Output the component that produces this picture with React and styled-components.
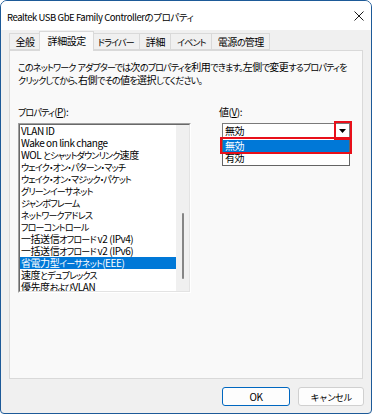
import React from 'react';
import styled, { createGlobalStyle } from 'styled-components';

const Global = createGlobalStyle`
  html, body { margin: 0; padding: 0; background: #ffffff; }
  body {
    font-family: "Noto Sans CJK JP", "Noto Sans", sans-serif;
    font-size: 10px;
    letter-spacing: -0.45px;
    color: #000;
    font-feature-settings: "palt";
  }
  #root { width: 372px; height: 414px; }
`;

const Kana = styled.span`
  font-size: 9px;
  letter-spacing: -0.8px;
  line-height: 0;
`;

const KANA_RE = /([\u3000-\u30FF\uFF01-\uFF60]+)/;

function JText({ children }) {
  const parts = String(children).split(KANA_RE);
  return parts.map((p, i) => (i % 2 === 1 ? <Kana key={i}>{p}</Kana> : p));
}

const Window = styled.div`
  box-sizing: border-box;
  width: 372px;
  height: 414px;
  border: 1px solid #1d5a98;
  border-radius: 7px 7px 4px 4px;
  background: #f0f0f0;
  display: flex;
  flex-direction: column;
  overflow: hidden;
`;

const TitleBar = styled.div`
  flex: none;
  height: 29px;
  background: #ffffff;
  display: flex;
  align-items: center;
  justify-content: space-between;
  padding: 0 7px 0 6px;
`;

const Title = styled.span`
  font-size: 9.5px;
  letter-spacing: -0.45px;
  line-height: 12px;
  margin-top: 2px;
`;

const CloseIcon = () => (
  <svg width="10" height="10" viewBox="0 0 10 10">
    <path d="M0.5 0.5 L9.5 9.5 M9.5 0.5 L0.5 9.5" stroke="#1a1a1a" strokeWidth="1" fill="none" />
  </svg>
);

const TabStrip = styled.div`
  flex: none;
  height: 20px;
  display: flex;
  align-items: flex-end;
  padding: 0 8px;
  position: relative;
  z-index: 1;
`;

const Tab = styled.div`
  box-sizing: border-box;
  height: ${(p) => (p.$active ? '20px' : '17px')};
  padding: ${(p) => (p.$active ? '0 7.5px 2px' : '0 5.5px')};
  margin: 0 ${(p) => (p.$active ? '-2px' : '0')} ${(p) => (p.$active ? '-1px' : '0')} ${(p) => (p.$active ? '-2px' : '-1px')};
  border: 1px solid #d9d9d9;
  border-bottom: ${(p) => (p.$active ? 'none' : '1px solid #d9d9d9')};
  background: ${(p) => (p.$active ? '#f9f9f9' : '#f0f0f0')};
  display: flex;
  align-items: center;
  justify-content: center;
  line-height: 12px;
  white-space: nowrap;
  position: relative;
  z-index: ${(p) => (p.$active ? 2 : 1)};
  &:first-child { margin-left: 0; }
`;

const Panel = styled.div`
  flex: 1;
  margin: 0 8px;
  border: 1px solid #d9d9d9;
  background: #f9f9f9;
  padding: 9px 8px 0 8px;
  display: flex;
  flex-direction: column;
`;

const Description = styled.p`
  margin: 0;
  line-height: 13px;
  white-space: nowrap;
`;

const Columns = styled.div`
  display: flex;
  margin-top: 20px;
`;

const Column = styled.div`
  width: ${(p) => p.$width}px;
  margin-left: ${(p) => p.$offset || 0}px;
  display: flex;
  flex-direction: column;
`;

const Label = styled.div`
  line-height: 12px;
  height: 12px;
  margin-bottom: 5px;
  white-space: nowrap;
  u { text-decoration: underline; text-underline-offset: 1px; }
`;

const ListFrame = styled.div`
  box-sizing: border-box;
  height: 170px;
  border: 1px solid;
  border-color: #a0a0a0 #ffffff #ffffff #a0a0a0;
`;

const ListInner = styled.div`
  box-sizing: border-box;
  height: 100%;
  border: 1px solid;
  border-color: #696969 #e3e3e3 #e3e3e3 #696969;
  background: #ffffff;
  display: flex;
`;

const Items = styled.div`
  flex: 1;
  display: flex;
  flex-direction: column;
  overflow: hidden;
`;

const Item = styled.div`
  flex: none;
  height: 12px;
  line-height: 12px;
  padding-left: 1px;
  white-space: nowrap;
  background: ${(p) => (p.$selected ? '#0078d7' : 'transparent')};
  color: ${(p) => (p.$selected ? '#ffffff' : '#000000')};
`;

const ScrollBar = styled.div`
  width: 13px;
  background: #f0f0f0;
  display: flex;
  justify-content: center;
`;

const Thumb = styled.div`
  width: 2px;
  height: 66px;
  margin-top: 88px;
  border-radius: 1px;
  background: #858585;
`;

const ComboWrap = styled.div`
  position: relative;
  margin-left: 3px;
  width: 128px;
`;

const Combo = styled.div`
  box-sizing: border-box;
  height: 16px;
  border: 1px solid #7a7a7a;
  background: #ffffff;
  display: flex;
  align-items: center;
`;

const ComboText = styled.span`
  flex: 1;
  padding-left: 2px;
  line-height: 12px;
`;

const DropButton = styled.div`
  width: 14px;
  height: 100%;
  display: flex;
  align-items: center;
  justify-content: center;
  background: #ffffff;
`;

const Arrow = () => (
  <svg width="7" height="4" viewBox="0 0 7 4">
    <path d="M0 0 H7 L3.5 4 Z" fill="#000" />
  </svg>
);

const Popup = styled.div`
  position: absolute;
  left: 0;
  top: 15px;
  width: 128px;
  box-sizing: border-box;
  border: 1px solid #646464;
  background: #ffffff;
  padding: 1px 0;
  z-index: 3;
`;

const PopupItem = styled.div`
  height: 12px;
  line-height: 12px;
  padding-left: 2px;
  background: ${(p) => (p.$selected ? '#0078d7' : '#ffffff')};
  color: ${(p) => (p.$selected ? '#ffffff' : '#000000')};
`;

const RedBox = styled.div`
  position: absolute;
  box-sizing: border-box;
  border: 2px solid #e8101a;
  left: ${(p) => p.$x}px;
  top: ${(p) => p.$y}px;
  width: ${(p) => p.$w}px;
  height: ${(p) => p.$h}px;
  z-index: 4;
  pointer-events: none;
`;

const ButtonRow = styled.div`
  flex: none;
  display: flex;
  justify-content: flex-end;
  gap: 8px;
  padding: 8px 7px 7px 0;
`;

const Button = styled.button`
  box-sizing: border-box;
  width: ${(p) => p.$width}px;
  height: 19px;
  border-radius: 3px;
  border: 1px solid ${(p) => (p.$primary ? '#0067c0' : '#d0d0d0')};
  background: #fdfdfd;
  font-family: inherit;
  font-size: 10px;
  letter-spacing: -0.45px;
  color: #000;
  padding: 0;
  line-height: 12px;
`;

const properties = [
  'VLAN ID',
  'Wake on link change',
  'WOL とシャットダウンリンク速度',
  'ウェイク・オン・パターン・マッチ',
  'ウェイク・オン・マジック・パケット',
  'グリーンイーサネット',
  'ジャンボフレーム',
  'ネットワークアドレス',
  'フローコントロール',
  '一括送信オフロード v2 (IPv4)',
  '一括送信オフロード v2 (IPv6)',
  '省電力型イーサネット(EEE)',
  '速度とデュプレックス',
  '優先度およびVLAN',
];

const tabs = ['全般', '詳細設定', 'ドライバー', '詳細', 'イベント', '電源の管理'];

export default function App() {
  return (
    <>
      <Global />
      <Window>
        <TitleBar>
          <Title>Realtek USB GbE Family Controllerのプロパティ</Title>
          <CloseIcon />
        </TitleBar>
        <TabStrip>
          {tabs.map((t) => (
            <Tab key={t} $active={t === '詳細設定'}>
              <span><JText>{t}</JText></span>
            </Tab>
          ))}
        </TabStrip>
        <Panel>
          <Description>
            <JText>このネットワーク アダプターでは次のプロパティを利用できます。左側で変更するプロパティを</JText>
            <br />
            <JText>クリックしてから、右側でその値を選択してください。</JText>
          </Description>
          <Columns>
            <Column $width={173}>
              <Label><JText>プロパティ</JText>(<u>P</u>):</Label>
              <ListFrame>
                <ListInner>
                  <Items>
                    {properties.map((p) => (
                      <Item key={p} $selected={p === '省電力型イーサネット(EEE)'}>
                        <JText>{p}</JText>
                      </Item>
                    ))}
                  </Items>
                  <ScrollBar>
                    <Thumb />
                  </ScrollBar>
                </ListInner>
              </ListFrame>
            </Column>
            <Column $width={131} $offset={28}>
              <Label>値(<u>V</u>):</Label>
              <ComboWrap>
                <Combo>
                  <ComboText>無効</ComboText>
                  <DropButton>
                    <Arrow />
                  </DropButton>
                </Combo>
                <Popup>
                  <PopupItem $selected>無効</PopupItem>
                  <PopupItem>有効</PopupItem>
                </Popup>
                <RedBox $x={112} $y={-2} $w={18} $h={19} />
                <RedBox $x={-2} $y={14} $w={132} $h={17} />
              </ComboWrap>
            </Column>
          </Columns>
        </Panel>
        <ButtonRow>
          <Button $primary $width={68}>OK</Button>
          <Button $width={66}><JText>キャンセル</JText></Button>
        </ButtonRow>
      </Window>
    </>
  );
}
